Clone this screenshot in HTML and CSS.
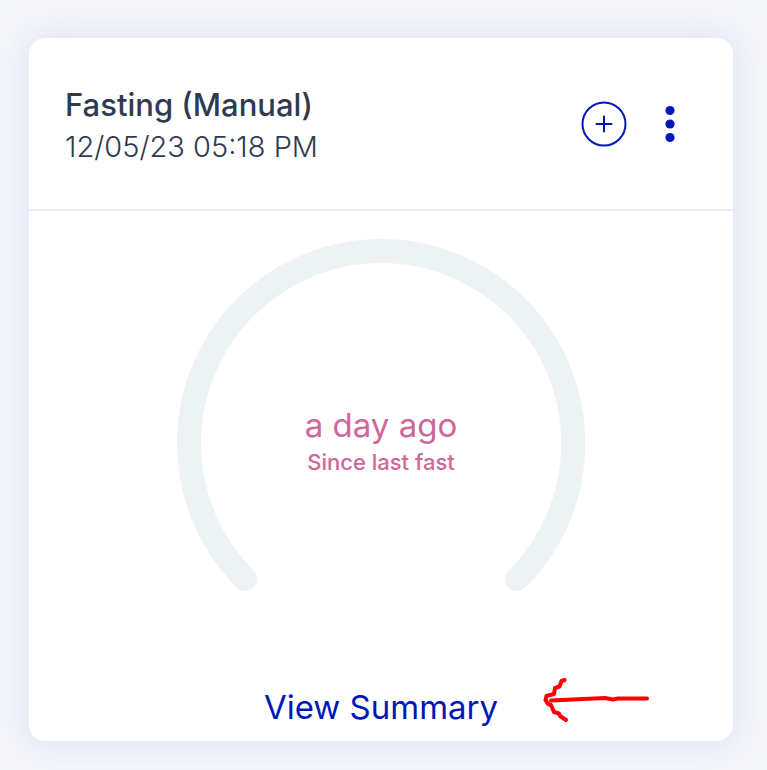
FILE: index.html
```html
<!DOCTYPE html>
<html lang="en">
    <head>
        <title>Fasting</title>
        <meta charset="UTF-8">
        <meta name="viewport" content="width=device-width, initial-scale=1">
        <link rel="stylesheet" href="styles.css">
    </head>

    <body>
        <main class="card">
            <header class="cardHeader">
                <div class="cardTitle">
                    <h1>Fasting (Manual)</h1>
                    <time datetime="2023-12-05T17:18">12/05/23 05:18 PM</time>
                </div>
                <div class="cardActions">
                    <button class="iconButton" type="button" aria-label="Add">
                        <svg width="46" height="46" viewBox="0 0 46 46" fill="none" stroke="currentColor" stroke-width="2">
                            <circle cx="23" cy="23" r="21.5"/>
                            <path d="M23 15.5v15M15.5 23h15" stroke-linecap="round"/>
                        </svg>
                    </button>
                    <button class="iconButton" type="button" aria-label="More options">
                        <svg width="10" height="46" viewBox="0 0 10 46" fill="currentColor">
                            <circle cx="5" cy="9.5" r="4.6"/>
                            <circle cx="5" cy="23" r="4.6"/>
                            <circle cx="5" cy="36.5" r="4.6"/>
                        </svg>
                    </button>
                </div>
            </header>

            <section class="gauge">
                <svg class="gaugeTrack" viewBox="0 0 408 352" fill="none">
                    <path d="M68.2 339.8A192 192 0 1 1 339.8 339.8" stroke="#edf3f5" stroke-width="24" stroke-linecap="round"/>
                </svg>
                <div class="gaugeText">
                    <p class="gaugeValue">a day ago</p>
                    <p class="gaugeLabel">Since last fast</p>
                </div>
            </section>

            <footer class="cardFooter">
                <a class="summaryLink" href="#summary">View Summary</a>
                <!-- hand drawn pointer to the link -->
                <svg class="arrow" width="110" height="46" viewBox="0 0 110 46" fill="none" stroke="#ff0000" stroke-width="4" stroke-linecap="round" stroke-linejoin="round">
                    <path d="M106 22.5H77L72 23.5L64 22L10 24.5"/>
                    <path d="M23.500 4L20.500 5L18.500 10.500L14 12L13 18L5.500 20L4.500 24L7 28L10 29L13 36L18 37.500L19 40L25 44"/>
                </svg>
            </footer>
        </main>
    </body>
</html>
```
FILE: styles.css
```css
*
{
    box-sizing: border-box;
}

body
{
    margin: 0;
    padding: 38px 34px 29px 29px;
    background-color: #f5f6fa;
    font-family: Inter, "Open Sans", Arial, sans-serif;
}

.card
{
    background-color: white;
    border-radius: 16px;
    box-shadow: 0 0 24px 2px #e2e4f6, 0 0 40px 10px #edf2fc;
}

.cardHeader
{
    display: flex;
    justify-content: space-between;
    align-items: center;
    padding: 45px 58px 45px 36px;
    border-bottom: 2px solid #e8ebfb;
    color: #2f3a50;
}

.cardTitle h1
{
    margin: 0;
    font-size: 31px;
    font-weight: 500;
    line-height: 43px;
}

.cardTitle time
{
    display: block;
    font-size: 29px;
    font-weight: 300;
    line-height: 35px;
    padding-top: 3px;
}

.cardActions
{
    display: flex;
    gap: 38px;
    color: #0017b9;
}

.iconButton
{
    padding: 0;
    border: none;
    background: none;
    color: inherit;
    cursor: pointer;
}

.iconButton svg
{
    display: block;
}

.gauge
{
    position: relative;
    padding-top: 28px;
}

.gaugeTrack
{
    display: block;
    width: 58%;
    margin: 0 auto;
}

/*text sits in the middle of the ring*/
.gaugeText
{
    position: absolute;
    top: 195px;
    left: 0;
    right: 0;
    text-align: center;
    color: #cf6698;
}

.gaugeText p
{
    margin: 0;
}

.gaugeValue
{
    font-size: 33px;
    line-height: 38px;
}

.gaugeLabel
{
    font-size: 22px;
    font-weight: 500;
    line-height: 36px;
}

.cardFooter
{
    position: relative;
    padding: 96px 0 14px;
    text-align: center;
}

.summaryLink
{
    color: #0017b9;
    font-size: 33px;
    line-height: 40px;
    text-decoration: none;
}

.arrow
{
    position: absolute;
    right: 82px;
    bottom: 19px;
}
```
